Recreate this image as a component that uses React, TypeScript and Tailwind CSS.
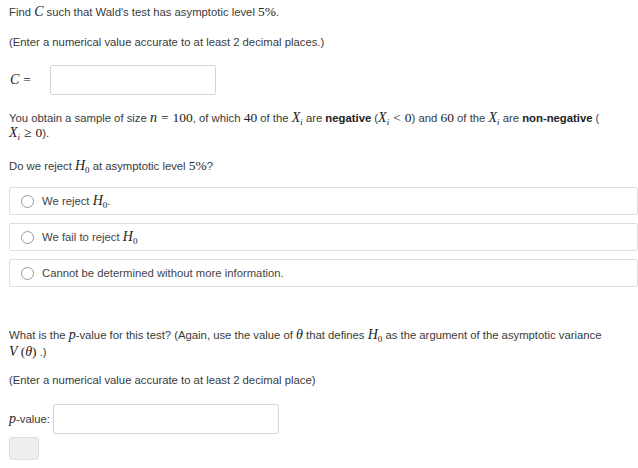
import React from "react";

const M = ({ children }: { children: React.ReactNode }) => (
  <span className="font-['Liberation_Serif',serif] italic text-[14px] leading-none text-[#222]">{children}</span>
);
const N = ({ children }: { children: React.ReactNode }) => (
  <span className="font-['Liberation_Serif',serif] text-[13.5px] leading-none text-[#222]">{children}</span>
);
const Op = ({ children }: { children: React.ReactNode }) => (
  <span className="font-['Liberation_Serif',serif] text-[13.5px] leading-none text-[#222] mx-[4px]">{children}</span>
);

const Xi = () => (
  <M>
    X<span className="relative top-[3px] text-[9px] leading-none">i</span>
  </M>
);
const H0 = () => (
  <M>
    H<span className="relative top-[3px] text-[9px] leading-none not-italic">0</span>
  </M>
);

const options = [
  <>We reject <H0 />.</>,
  <>We fail to reject <H0 /></>,
  <>Cannot be determined without more information.</>,
];

export default function App() {
  return (
    <div className="w-[638px] h-[468px] overflow-hidden bg-white font-['Liberation_Sans',sans-serif] text-[11.3px] text-[#3a3a3a] pl-[9px] pt-[3px]">
      <p className="leading-[18px]">
        Find <M>C</M> such that Wald's test has asymptotic level <N>5%</N>.
      </p>
      <p className="mt-[12px] leading-[18px]">(Enter a numerical value accurate to at least 2 decimal places.)</p>

      <div className="mt-[14px] flex items-center">
        <span className="w-[41px] pl-[1px]">
          <M>C</M>
          <Op>=</Op>
        </span>
        <input className="w-[166px] h-[30px] border border-[#d6d6d6] rounded-[2px] outline-none" />
      </div>

      <p className="mt-[16px] leading-[15px] pr-[2px]">
        You obtain a sample of size <M>n</M>
        <Op>=</Op>
        <N>100</N>, of which <N>40</N> of the <Xi /> are <b className="font-bold text-[#222]">negative</b> (<Xi />
        <Op>&lt;</Op>
        <N>0</N>) and <N>60</N> of the <Xi /> are <b className="font-bold text-[#222]">non-negative</b> (
        <br />
        <Xi />
        <Op>≥</Op>
        <N>0</N>).
      </p>

      <p className="mt-[16px] leading-[18px]">
        Do we reject <H0 /> at asymptotic level <N>5%</N>?
      </p>

      <div className="mt-[12px] flex flex-col gap-[8px]">
        {options.map((o, i) => (
          <label
            key={i}
            className="h-[28px] border border-[#dedede] rounded-[2px] flex items-center pl-[11px] gap-[8px] text-[#444]"
          >
            <span className="w-[13px] h-[13px] rounded-full border border-[#999] bg-white shrink-0" />
            <span>{o}</span>
          </label>
        ))}
      </div>

      <p className="mt-[40px] leading-[17px]">
        What is the <M>p</M>-value for this test? (Again, use the value of <M>θ</M> that defines <H0 /> as the argument of the asymptotic variance
        <br />
        <M>V</M> <N>(</N><M>θ</M><N>)</N> .)
      </p>
      <p className="mt-[10px] leading-[18px]">(Enter a numerical value accurate to at least 2 decimal place)</p>

      <div className="mt-[15px] flex items-center">
        <span className="w-[44px]">
          <M>p</M>-value:
        </span>
        <input className="w-[226px] h-[30px] border border-[#d6d6d6] rounded-[2px] outline-none" />
      </div>
      <button className="mt-[3px] w-[30px] h-[23px] bg-[#eeeeee] border border-[#dedede] rounded-[3px] block" />
    </div>
  );
}
